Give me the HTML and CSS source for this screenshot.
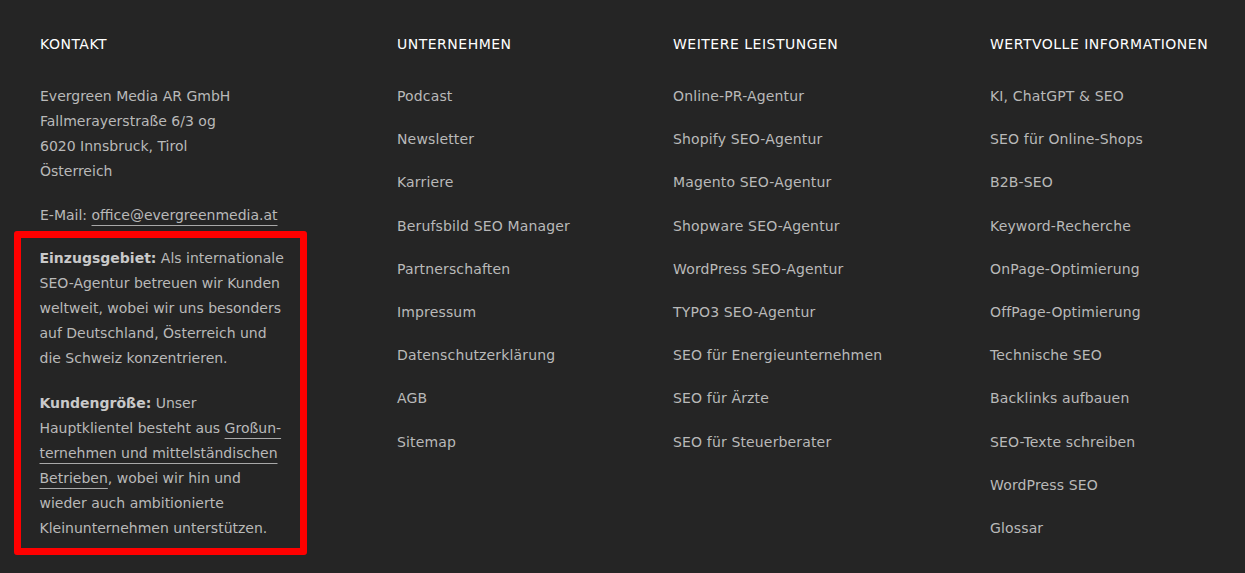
FILE: index.html
```html
<!DOCTYPE html>
<html lang="de">
<head>
<meta charset="utf-8">
<title>Footer</title>
<link rel="stylesheet" href="styles.css">
</head>
<body>
<footer class="footer">
  <div class="col col-contact">
    <h3 class="heading">KONTAKT</h3>
    <p class="para">Evergreen Media AR GmbH<br>Fallmerayerstraße 6/3 og<br>6020 Innsbruck, Tirol<br>Österreich</p>
    <p class="para">E-Mail: <a class="ulink" href="#">office@evergreenmedia.at</a></p>
    <div class="highlight">
      <p class="para"><strong>Einzugsgebiet:</strong> Als internationale SEO-Agentur betreuen wir Kunden weltweit, wobei wir uns besonders auf Deutschland, Österreich und die Schweiz konzentrieren.</p>
      <p class="para"><strong>Kundengröße:</strong> Unser Hauptklientel besteht aus <a class="ulink" href="#">Großun&shy;ternehmen und mittelständischen Betrieben</a>, wobei wir hin und wieder auch ambitionierte Kleinunternehmen unterstützen.</p>
    </div>
  </div>
  <div class="col">
    <h3 class="heading">UNTERNEHMEN</h3>
    <ul class="links">
      <li>Podcast</li>
      <li>Newsletter</li>
      <li>Karriere</li>
      <li>Berufsbild SEO Manager</li>
      <li>Partnerschaften</li>
      <li>Impressum</li>
      <li>Datenschutzerklärung</li>
      <li>AGB</li>
      <li>Sitemap</li>
    </ul>
  </div>
  <div class="col">
    <h3 class="heading">WEITERE LEISTUNGEN</h3>
    <ul class="links">
      <li>Online-PR-Agentur</li>
      <li>Shopify SEO-Agentur</li>
      <li>Magento SEO-Agentur</li>
      <li>Shopware SEO-Agentur</li>
      <li>WordPress SEO-Agentur</li>
      <li>TYPO3 SEO-Agentur</li>
      <li>SEO für Energieunternehmen</li>
      <li>SEO für Ärzte</li>
      <li>SEO für Steuerberater</li>
    </ul>
  </div>
  <div class="col">
    <h3 class="heading">WERTVOLLE INFORMATIONEN</h3>
    <ul class="links">
      <li>KI, ChatGPT &amp; SEO</li>
      <li>SEO für Online-Shops</li>
      <li>B2B-SEO</li>
      <li>Keyword-Recherche</li>
      <li>OnPage-Optimierung</li>
      <li>OffPage-Optimierung</li>
      <li>Technische SEO</li>
      <li>Backlinks aufbauen</li>
      <li>SEO-Texte schreiben</li>
      <li>WordPress SEO</li>
      <li>Glossar</li>
    </ul>
  </div>
</footer>
</body>
</html>
```

FILE: styles.css
```css
html, body {
  margin: 0;
  padding: 0;
  background: #252525;
}
body {
  font-family: "DejaVu Sans", "Liberation Sans", sans-serif;
  font-size: 14px;
  color: #b9b9b9;
  height: 573px;
  overflow: hidden;
}
.footer {
  display: grid;
  grid-template-columns: 357px 276px 317px 1fr;
  padding: 34px 0 0 40px;
}
.heading {
  margin: 0 0 30px 0;
  font-size: 14px;
  font-weight: normal;
  line-height: 20px;
  letter-spacing: 0.5px;
  color: #ffffff;
  white-space: nowrap;
}
.col-contact {
  width: 255px;
}
.para {
  margin: 0 0 19px 0;
  line-height: 25px;
  hyphens: manual;
}
.para strong {
  font-weight: bold;
  color: #c9c9c9;
}
.ulink {
  color: inherit;
  text-decoration: underline;
  text-decoration-color: #a8a8a8;
  text-decoration-thickness: 1px;
  text-underline-offset: 5px;
}
.col-contact > .para:nth-of-type(2) {
  margin-bottom: 3px;
}
.highlight {
  margin-left: -26px;
  width: 293px;
  box-sizing: border-box;
  border: 7.5px solid #ff0000;
  border-radius: 3px;
  padding: 7.5px 10px 7.5px 18.5px;
}
.highlight .para {
  margin-bottom: 20px;
}
.highlight .para:last-child {
  margin-bottom: 0;
}
.links {
  list-style: none;
  margin: -9.1px 0 0 0;
  padding: 0;
}
.links li {
  line-height: 25px;
  padding: 9.1px 0;
  letter-spacing: 0.15px;
  white-space: nowrap;
}
```
